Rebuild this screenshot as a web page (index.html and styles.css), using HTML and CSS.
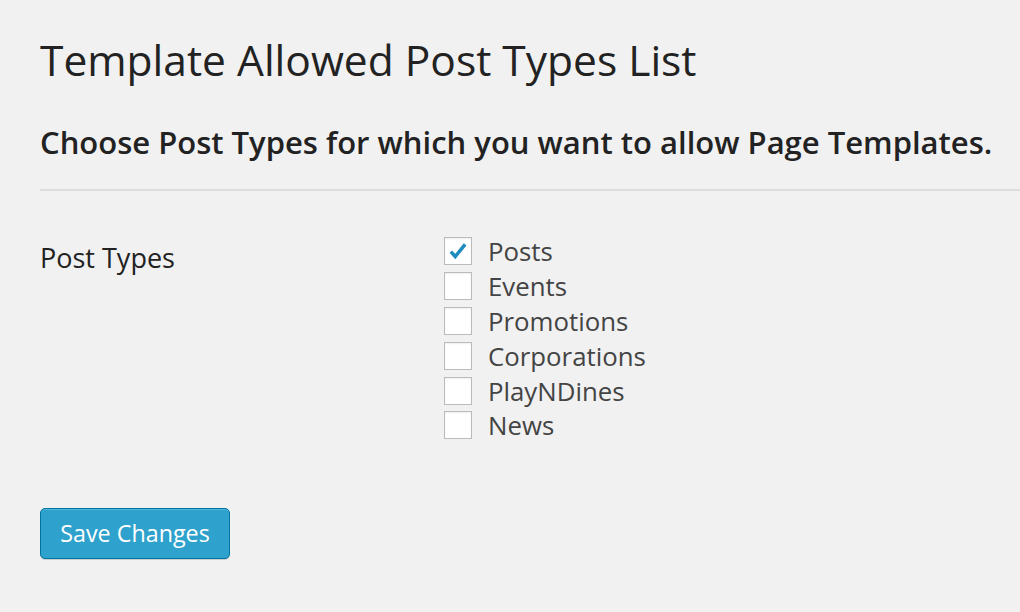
FILE: index.html
```html
<!DOCTYPE html>
<html>
<head>
<meta charset="utf-8">
<link rel="stylesheet" href="styles.css">
</head>
<body>
<div class="wrap">
  <h1 class="title">Template Allowed Post Types List</h1>
  <h3 class="subtitle">Choose Post Types for which you want to allow Page Templates.</h3>
  <hr class="divider">
  <div class="form-row">
    <div class="label">Post Types</div>
    <ul class="checks">
      <li><span class="box checked"><svg viewBox="0 0 20 20" width="22" height="22"><path d="M3.5 10.5l4 4.5 9-11" fill="none" stroke="#1e8cbe" stroke-width="3.2" stroke-linecap="butt"/></svg></span><span class="opt">Posts</span></li>
      <li><span class="box"></span><span class="opt">Events</span></li>
      <li><span class="box"></span><span class="opt">Promotions</span></li>
      <li><span class="box"></span><span class="opt">Corporations</span></li>
      <li><span class="box"></span><span class="opt">PlayNDines</span></li>
      <li><span class="box"></span><span class="opt">News</span></li>
    </ul>
  </div>
  <button class="btn">Save Changes</button>
</div>
</body>
</html>
```
FILE: styles.css
```css
html, body {
  margin: 0;
  padding: 0;
  background: #f1f1f1;
}
body {
  font-family: "Open Sans", sans-serif;
  color: #222;
  width: 1020px;
  height: 612px;
  overflow: hidden;
}
.wrap {
  padding: 34px 0 0 40px;
}
.title {
  margin: 0;
  font-size: 42.5px;
  font-weight: 400;
  line-height: 52px;
  color: #222;
}
.subtitle {
  margin: 36px 0 0 0;
  font-size: 31px;
  font-weight: 600;
  line-height: 40px;
  color: #222;
}
.divider {
  margin: 27px 0 0 0;
  border: 0;
  height: 2px;
  background: #dddddd;
}
.form-row {
  display: flex;
  margin-top: 43px;
}
.label {
  width: 404px;
  font-size: 27px;
  line-height: 32px;
  color: #222;
  padding-top: 8px;
}
.checks {
  list-style: none;
  margin: 0;
  padding: 0;
}
.checks li {
  display: flex;
  align-items: center;
  height: 34.8px;
}
.box {
  width: 26px;
  height: 26px;
  border: 1px solid #bbb;
  background: #fff;
  box-shadow: inset 0 1px 2px rgba(0,0,0,0.07);
  display: flex;
  align-items: center;
  justify-content: center;
  margin-right: 16px;
}
.opt {
  font-size: 25.8px;
  color: #444;
  line-height: 32px;
}
.btn {
  display: block;
  margin-top: 65px;
  width: 190px;
  height: 51px;
  background: #2ea2cc;
  border: 1px solid #0074a2;
  border-radius: 5px;
  color: #fff;
  font-family: "Open Sans", sans-serif;
  font-size: 23.3px;
  padding: 0;
  box-shadow: inset 0 1px 0 rgba(120,200,230,0.5), 0 1px 0 rgba(0,0,0,0.15);
}
```
